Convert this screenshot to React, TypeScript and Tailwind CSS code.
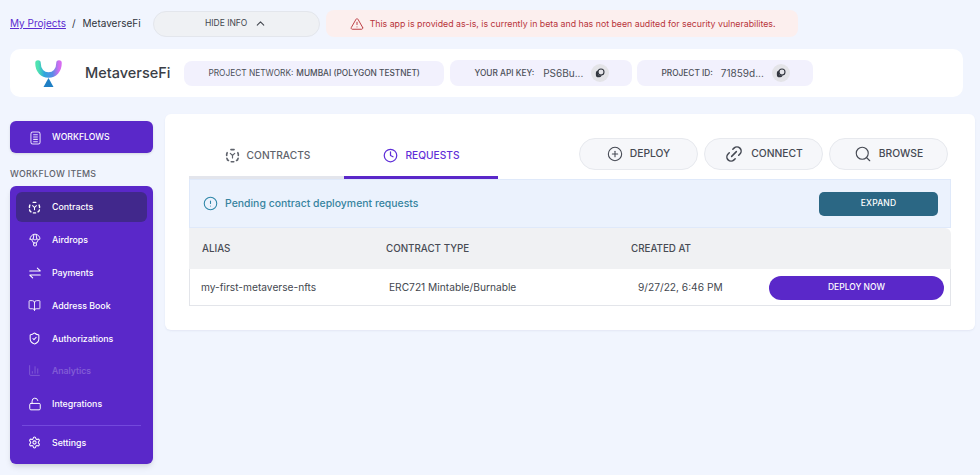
import React from "react";
import { ChevronUp, TriangleAlert, CirclePlus, Link2, Search, Clock, CircleAlert, BookOpen, ShieldCheck, ChartColumn, LockOpen, Settings } from "lucide-react";

const Dashed = ({ className = "" }: { className?: string }) => (
  <svg viewBox="0 0 24 24" fill="none" stroke="currentColor" strokeWidth="2.600" strokeLinecap="round" className={className}>
    <path d="M9.500 2.500h5M3.500 7.500l-.8 2.500v2M20.500 7.500l.8 2.500v2M3 16.500l1 2.500 1.500 1M21 16.500l-1 2.500-1.500 1M10 22h4" />
    <path d="M8.500 8.500 12 12l3.500-3.500M12 12v4" strokeWidth="1.900" />
  </svg>
);

const Balloon = ({ className = "" }: { className?: string }) => (
  <svg viewBox="0 0 24 24" fill="none" stroke="currentColor" strokeWidth="1.600" strokeLinecap="round" strokeLinejoin="round" className={className}>
    <path d="M3.500 10.500a8.500 8.500 0 0 1 17 0c0 .6-2 1-3.200.4-1.200-.6-2.100-.6-3 0-1.400.9-3.200.9-4.600 0-.9-.6-1.800-.6-3 0-1.200.6-3.200.2-3.200-.4Z" />
    <path d="M6.500 12l3 5M17.500 12l-3 5M10 3l-1 7M14 3l1 7" />
    <rect x="9.500" y="17" width="5" height="5" rx="1" />
  </svg>
);

const Swap = ({ className = "" }: { className?: string }) => (
  <svg viewBox="0 0 24 24" fill="none" stroke="currentColor" strokeWidth="1.800" strokeLinecap="round" strokeLinejoin="round" className={className}>
    <path d="M3 8.500h17M16 3.500l5 5" />
    <path d="M21 15.500H4M8 20.500l-5-5" />
  </svg>
);

const Logo = () => (
  <svg viewBox="0 0 27 27" className="w-[27px] h-[27px]" fill="none">
    <defs>
      <linearGradient id="logoArc" x1="0" y1="0" x2="1" y2="0">
        <stop offset="0" stopColor="#4fe3b0" />
        <stop offset="0.3" stopColor="#2fa6dc" />
        <stop offset="0.7" stopColor="#5a8be6" />
        <stop offset="1" stopColor="#d56cf0" />
      </linearGradient>
    </defs>
    <path d="M3 3c0 7.500 4.500 12 10.500 12S24 10.500 24 3" stroke="url(#logoArc)" strokeWidth="5.500" strokeLinecap="round" />
    <path d="M13.500 18 18.500 27h-10Z" fill="#1f7fc4" />
  </svg>
);

const navItems: { label: string; icon: React.ReactNode; cls?: string }[] = [
  { label: "Contracts", icon: <Dashed className="w-[13px] h-[13px]" />, cls: "bg-[#41288c] rounded-[6px]" },
  { label: "Airdrops", icon: <Balloon className="w-[14px] h-[14px]" /> },
  { label: "Payments", icon: <Swap className="w-[14px] h-[14px]" /> },
  { label: "Address Book", icon: <BookOpen className="w-[13px] h-[13px]" strokeWidth={1.6} /> },
  { label: "Authorizations", icon: <ShieldCheck className="w-[13px] h-[13px]" strokeWidth={1.9} /> },
  { label: "Analytics", icon: <ChartColumn className="w-[13px] h-[13px]" strokeWidth={1.6} />, cls: "opacity-25" },
  { label: "Integrations", icon: <LockOpen className="w-[14px] h-[14px]" strokeWidth={1.7} /> },
];

const Pill = ({ children, cls }: { children: React.ReactNode; cls: string }) => (
  <div className={`rounded-[8px] bg-[#f2f1fd] flex items-center text-[#4b4f58] ${cls}`}>{children}</div>
);

const CopyBtn = () => (
  <span className="w-[18px] h-[18px] rounded-full bg-[#e4e4e8] flex items-center justify-center">
    <svg viewBox="0 0 10 10" className="w-[10px] h-[10px]" fill="none" stroke="#33373f" strokeWidth="1.100">
      <circle cx="6" cy="4" r="3" />
      <path d="M1.400 4.800a1.800 1.800 0 0 1 1.100-1.500v3a1.400 1.400 0 0 0 1.400 1.400h2a2.200 2.200 0 0 1-1.800 1.100H3.500a2.100 2.100 0 0 1-2.100-2.100Z" fill="#33373f" />
    </svg>
  </span>
);

const ActionBtn = ({ icon, label }: { icon: React.ReactNode; label: string }) => (
  <button className="w-[119px] h-[32px] rounded-full border border-[#e7e9ee] bg-[#f6f7fa] flex items-center justify-center gap-[7px] text-[10.300px] font-medium text-[#454953]">
    {icon}
    {label}
  </button>
);

export default function App() {
  return (
    <div className="w-[980px] h-[475px] overflow-hidden bg-[#f1f5fe] font-['Inter',sans-serif] flex flex-col">
      {/* top row */}
      <div className="flex items-center h-[27px] mt-[10px] pl-[10px]">
        <a className="text-[10px] text-[#5b2ad0] underline">My Projects</a>
        <span className="text-[10px] text-[#30343c] ml-[6px]">/</span>
        <span className="text-[10px] text-[#30343c] ml-[7px]">MetaverseFi</span>
        <div className="ml-[12px] w-[167px] h-[26px] rounded-full bg-[#eff1f4] border border-[#e3e6ec] flex items-center justify-center gap-[7px] text-[8.500px] text-[#43474f]">
          HIDE INFO
          <ChevronUp className="w-[13px] h-[13px]" strokeWidth={2} />
        </div>
        <div className="ml-[6px] w-[472px] h-[27px] rounded-[8px] bg-[#fcefee] flex items-center pl-[24px] gap-[6px] text-[8.780px] text-[#b8343a]">
          <TriangleAlert className="w-[14px] h-[14px]" strokeWidth={1.6} />
          This app is provided as-is, is currently in beta and has not been audited for security vulnerabilites.
        </div>
      </div>

      {/* project card */}
      <div className="ml-[10px] mt-[12px] w-[953px] h-[48px] rounded-[10px] bg-white flex items-center">
        <div className="ml-[25px] w-[27px] flex justify-center"><Logo /></div>
        <span className="ml-[23px] text-[14.500px] font-medium text-[#3a3e46]">MetaverseFi</span>
        <Pill cls="ml-[14px] w-[260px] h-[25px] pl-[24px] gap-[3px] text-[8.300px]">
          <span>PROJECT NETWORK:</span>
          <span className="font-medium">MUMBAI (POLYGON TESTNET)</span>
        </Pill>
        <Pill cls="ml-[6px] w-[182px] h-[26px] pl-[24px] text-[8.300px]">
          <span className="font-medium">YOUR API KEY:</span>
          <span className="ml-[9px] text-[10px]">PS6Bu...</span>
          <span className="ml-[8px]"><CopyBtn /></span>
        </Pill>
        <Pill cls="ml-[5px] w-[176px] h-[26px] pl-[24px] text-[8.300px]">
          <span className="font-medium">PROJECT ID:</span>
          <span className="ml-[8px] text-[10px]">71859d...</span>
          <span className="ml-[8px]"><CopyBtn /></span>
        </Pill>
      </div>

      {/* body */}
      <div className="flex mt-[17px] pl-[10px]">
        <aside className="w-[143px] pt-[7px]">
          <div className="h-[32px] rounded-[6px] bg-[#5a28c9] flex items-center pl-[20px] pt-[1px] gap-[11px] text-white text-[8.700px] font-medium shadow-sm">
            <svg viewBox="0 0 12 15" className="w-[11px] h-[14px]" fill="none" stroke="#e5dcfb" strokeWidth="1.100">
              <rect x="1" y="1" width="10" height="13" rx="2" />
              <path d="M3.500 4h5M3.500 6.500h5M3.500 9h5M3.500 11.500h5" />
            </svg>
            WORKFLOWS
          </div>
          <div className="mt-[14px] h-[13px] flex items-center text-[8.800px] font-medium tracking-[0.3px] text-[#5e626b]">WORKFLOW ITEMS</div>
          <div className="mt-[6px] h-[278px] rounded-[6px] bg-[#5a28c9] px-[6px] pt-[6px] shadow-md">
            <div className="flex flex-col gap-[2.800px]">
              {navItems.map((n) => (
                <div key={n.label} className={`h-[30px] flex items-center text-white text-[8.800px] font-medium ${n.cls ?? ""}`}>
                  <span className="w-[36px] flex justify-center pl-[1px]">{n.icon}</span>
                  {n.label}
                </div>
              ))}
            </div>
            <div className="mt-[6px] mx-[6px] h-px bg-[#7349dc]" />
            <div className="mt-[2px] h-[30px] flex items-center text-white text-[8.800px] font-medium">
              <span className="w-[36px] flex justify-center pl-[1px]"><Settings className="w-[13px] h-[13px]" strokeWidth={1.9} /></span>
              Settings
            </div>
          </div>
        </aside>

        <main className="ml-[12px] w-[810px] h-[216px] rounded-[6px] bg-white pl-[24px] pt-[24px] shadow-[0_1px_2px_rgba(120,130,170,0.12)]">
          <div className="flex items-start h-[41px]">
            <div className="w-[155px] h-[41px] border-b-[3px] border-[#e3e5ec] flex items-center justify-center gap-[7px] pb-[3px] pl-[2px] text-[#5f636c] text-[10.200px] font-medium">
              <Dashed className="w-[15px] h-[15px]" />
              CONTRACTS
            </div>
            <div className="w-[154px] h-[41px] border-b-[3px] border-[#5a28c9] flex items-center justify-center gap-[7px] pb-[3px] pl-[1px] text-[#5f2fd8] text-[10.200px] font-medium">
              <Clock className="w-[15px] h-[15px]" strokeWidth={2} />
              REQUESTS
            </div>
            <div className="ml-[81px] flex gap-[6px]">
              <ActionBtn icon={<CirclePlus className="w-[16px] h-[16px]" strokeWidth={1.6} />} label="DEPLOY" />
              <ActionBtn icon={<Link2 className="w-[20px] h-[20px] -rotate-45" strokeWidth={1.8} />} label="CONNECT" />
              <ActionBtn icon={<Search className="w-[18px] h-[18px]" strokeWidth={1.5} />} label="BROWSE" />
            </div>
          </div>

          <div className="w-[762px] h-[49px] bg-[#ebf2fd] border border-[#dfe9fa] flex items-center pl-[13px] pr-[12px]">
            <CircleAlert className="w-[15px] h-[15px] text-[#2d86a8]" strokeWidth={1.7} />
            <span className="ml-[7px] text-[10.450px] font-medium text-[#37849f]">Pending contract deployment requests</span>
            <button className="ml-auto w-[119px] h-[24px] rounded-[5px] bg-[#2b6784] text-white text-[8.500px] font-medium tracking-[0.2px]">EXPAND</button>
          </div>

          <div className="w-[762px] h-[41px] bg-[#f0f1f3] rounded-tr-[6px] flex items-center pt-[1px] text-[9.800px] font-medium text-[#474b53]">
            <span className="ml-[13px] w-[184px]">ALIAS</span>
            <span className="w-[245px]">CONTRACT TYPE</span>
            <span>CREATED AT</span>
          </div>
          <div className="w-[762px] h-[37px] border-x border-b border-[#e3e5ea] flex items-center pt-[1px] text-[10.200px] text-[#43474f]">
            <span className="ml-[11px] w-[188px]">my-first-metaverse-nfts</span>
            <span className="w-[249px]">ERC721 Mintable/Burnable</span>
            <span className="w-[131px]">9/27/22, 6:46 PM</span>
            <button className="w-[175px] h-[24px] rounded-full bg-[#5a28c9] text-white text-[8.500px] font-medium">DEPLOY NOW</button>
          </div>
        </main>
      </div>
    </div>
  );
}
